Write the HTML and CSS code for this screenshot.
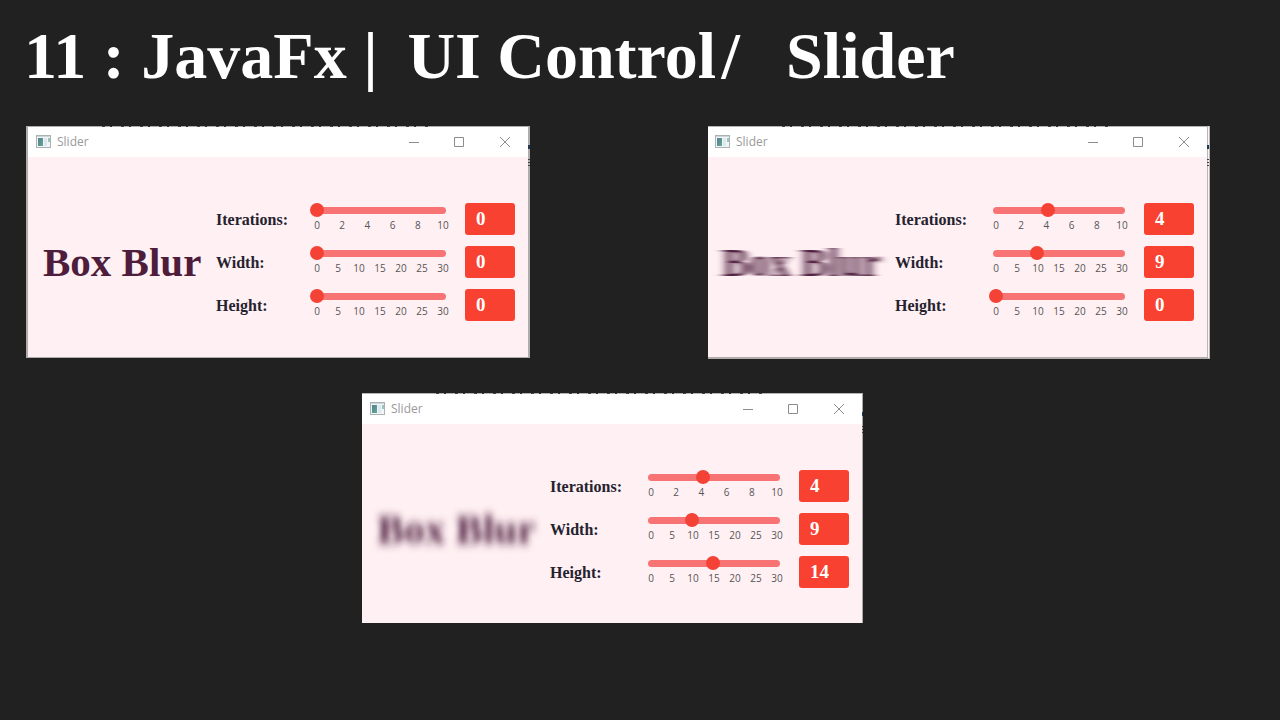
FILE: index.html
```html
<!doctype html>
<html lang="en">
<head>
<meta charset="utf-8">
<meta name="viewport" content="width=device-width, initial-scale=1">
<title>11 : JavaFx | UI Control / Slider</title>
<link rel="stylesheet" href="styles.css">
</head>
<body>

<!-- shared icons and blur filters -->
<svg class="defs" width="0" height="0" aria-hidden="true">
    <defs>
        <linearGradient id="teal" x1="0" y1="0" x2="1" y2="1">
            <stop offset="0" stop-color="#5a7d92"/>
            <stop offset="1" stop-color="#5fa894"/>
        </linearGradient>
        <filter id="blurWidth" x="-20%" y="-20%" width="140%" height="140%">
            <feGaussianBlur stdDeviation="4 0"/>
        </filter>
        <filter id="blurBoth" x="-20%" y="-50%" width="140%" height="200%">
            <feGaussianBlur stdDeviation="3 5"/>
        </filter>
        <symbol id="app" viewBox="0 0 16 14">
            <rect x=".5" y=".5" width="14" height="12" fill="#f1f5f6" stroke="#a9b3b6"/>
            <path d="M1 1.500h13" stroke="#cdd5d8"/>
            <rect x="2" y="3" width="5" height="8" fill="url(#teal)"/>
            <rect x="8" y="3" width="3" height="8" fill="#dde7f0"/>
            <rect x="12" y="3" width="2" height="4" fill="#9cc4bb"/>
        </symbol>
        <symbol id="min" viewBox="0 0 12 12"><path d="M2 6.500h10" stroke="#8c8c8c"/></symbol>
        <symbol id="max" viewBox="0 0 12 12"><path d="M1.500 1.500h9v9h-9z" fill="none" stroke="#8c8c8c"/></symbol>
        <symbol id="close" viewBox="0 0 12 12"><path d="M1 1l10 10M11 1L1 11" stroke="#8c8c8c"/></symbol>
    </defs>
</svg>

<h1>11 : JavaFx |&thinsp; UI Control&hairsp;/&nbsp;&thinsp; Slider</h1>

<main>
    <div class="row">
        <section class="window framed">
            <header class="titlebar">
                <svg class="app-icon"><use href="#app"/></svg>
                <span class="name">Slider</span>
                <button type="button" aria-label="Minimize"><svg><use href="#min"/></svg></button>
                <button type="button" aria-label="Maximize"><svg><use href="#max"/></svg></button>
                <button type="button" aria-label="Close"><svg><use href="#close"/></svg></button>
            </header>
            <div class="content">
                <div class="sample">Box Blur</div>
                <div class="controls">
                    <div class="control">
                        <label for="iter1">Iterations:</label>
                        <div class="slider">
                            <input type="range" id="iter1" min="0" max="10" value="0">
                            <div class="ticks"><span>0</span><span>2</span><span>4</span><span>6</span><span>8</span><span>10</span></div>
                        </div>
                        <input class="value" type="text" value="0" aria-label="Iterations value">
                    </div>
                    <div class="control">
                        <label for="width1">Width:</label>
                        <div class="slider">
                            <input type="range" id="width1" min="0" max="30" value="0">
                            <div class="ticks"><span>0</span><span>5</span><span>10</span><span>15</span><span>20</span><span>25</span><span>30</span></div>
                        </div>
                        <input class="value" type="text" value="0" aria-label="Width value">
                    </div>
                    <div class="control">
                        <label for="height1">Height:</label>
                        <div class="slider">
                            <input type="range" id="height1" min="0" max="30" value="0">
                            <div class="ticks"><span>0</span><span>5</span><span>10</span><span>15</span><span>20</span><span>25</span><span>30</span></div>
                        </div>
                        <input class="value" type="text" value="0" aria-label="Height value">
                    </div>
                </div>
            </div>
        </section>

        <section class="window edged">
            <header class="titlebar">
                <svg class="app-icon"><use href="#app"/></svg>
                <span class="name">Slider</span>
                <button type="button" aria-label="Minimize"><svg><use href="#min"/></svg></button>
                <button type="button" aria-label="Maximize"><svg><use href="#max"/></svg></button>
                <button type="button" aria-label="Close"><svg><use href="#close"/></svg></button>
            </header>
            <div class="content">
                <div class="sample blur-width">Box Blur</div>
                <div class="controls">
                    <div class="control">
                        <label for="iter2">Iterations:</label>
                        <div class="slider">
                            <input type="range" id="iter2" min="0" max="10" step="any" value="4.1">
                            <div class="ticks"><span>0</span><span>2</span><span>4</span><span>6</span><span>8</span><span>10</span></div>
                        </div>
                        <input class="value" type="text" value="4" aria-label="Iterations value">
                    </div>
                    <div class="control">
                        <label for="width2">Width:</label>
                        <div class="slider">
                            <input type="range" id="width2" min="0" max="30" step="any" value="9.8">
                            <div class="ticks"><span>0</span><span>5</span><span>10</span><span>15</span><span>20</span><span>25</span><span>30</span></div>
                        </div>
                        <input class="value" type="text" value="9" aria-label="Width value">
                    </div>
                    <div class="control">
                        <label for="height2">Height:</label>
                        <div class="slider">
                            <input type="range" id="height2" min="0" max="30" value="0">
                            <div class="ticks"><span>0</span><span>5</span><span>10</span><span>15</span><span>20</span><span>25</span><span>30</span></div>
                        </div>
                        <input class="value" type="text" value="0" aria-label="Height value">
                    </div>
                </div>
            </div>
        </section>
    </div>

    <div class="row center">
        <section class="window plain">
            <header class="titlebar">
                <svg class="app-icon"><use href="#app"/></svg>
                <span class="name">Slider</span>
                <button type="button" aria-label="Minimize"><svg><use href="#min"/></svg></button>
                <button type="button" aria-label="Maximize"><svg><use href="#max"/></svg></button>
                <button type="button" aria-label="Close"><svg><use href="#close"/></svg></button>
            </header>
            <div class="content">
                <div class="sample blur-both">Box Blur</div>
                <div class="controls">
                    <div class="control">
                        <label for="iter3">Iterations:</label>
                        <div class="slider">
                            <input type="range" id="iter3" min="0" max="10" step="any" value="4.1">
                            <div class="ticks"><span>0</span><span>2</span><span>4</span><span>6</span><span>8</span><span>10</span></div>
                        </div>
                        <input class="value" type="text" value="4" aria-label="Iterations value">
                    </div>
                    <div class="control">
                        <label for="width3">Width:</label>
                        <div class="slider">
                            <input type="range" id="width3" min="0" max="30" step="any" value="9.8">
                            <div class="ticks"><span>0</span><span>5</span><span>10</span><span>15</span><span>20</span><span>25</span><span>30</span></div>
                        </div>
                        <input class="value" type="text" value="9" aria-label="Width value">
                    </div>
                    <div class="control">
                        <label for="height3">Height:</label>
                        <div class="slider">
                            <input type="range" id="height3" min="0" max="30" step="any" value="14.8">
                            <div class="ticks"><span>0</span><span>5</span><span>10</span><span>15</span><span>20</span><span>25</span><span>30</span></div>
                        </div>
                        <input class="value" type="text" value="14" aria-label="Height value">
                    </div>
                </div>
            </div>
        </section>
    </div>
</main>

</body>
</html>
```

FILE: styles.css
```css
*{
    box-sizing: border-box;
}
body{
    margin: 0;
    min-height: 100vh;
    background-color: #212121;
    font-family: "Palatino Linotype", Palatino, "Liberation Serif", serif;
}
.defs{
    position: absolute;
}
h1{
    margin: 0;
    padding: 16px 24px 30px;
    color: #fff;
    font-size: 66px;
    line-height: 80px;
    white-space: nowrap;
}
main{
    display: flex;
    flex-direction: column;
    gap: 34px;
    padding: 0 70px 20px 26px;
}
.row{
    display: flex;
    justify-content: space-between;
    align-items: flex-start;
}
.center{
    justify-content: center;
    padding-right: 11px;
}

/* window */
.window{
    position: relative;
    border-top: 1px solid #b5b3b3;
    border-right: 1px solid #aaa;
    background-color: #fff0f3;
}
.framed{
    border: 2px solid #b0acac;
    border-top-width: 1px;
    border-bottom-width: 1px;
}
.edged{
    border-right: 3px double #b8b6b6;
    border-bottom: 2px solid #b0acac;
}
.window::before{
    content: "";
    position: absolute;
    top: -1px;
    left: 74px;
    width: 330px;
    height: 1px;
    background: repeating-linear-gradient(90deg, #444 0 3px, transparent 3px 8px, #333 8px 10px, transparent 10px 19px);
}
.window::after{
    content: "";
    position: absolute;
    top: 18px;
    right: -2px;
    width: 2px;
    height: 21px;
    background: linear-gradient(#1b3a52 4px, transparent 4px 14px, #444 14px 15px, transparent 15px 17px, #444 17px 18px, transparent 18px 20px, #444 20px);
}
.plain::after{
    right: -1px;
    width: 1px;
}
.titlebar{
    display: flex;
    align-items: center;
    height: 30px;
    padding-left: 8px;
    background-color: #fff;
}
.app-icon{
    width: 16px;
    height: 14px;
}
.name{
    flex: 1;
    margin-left: 5px;
    color: #999;
    font: 12px/16px "Open Sans", "Noto Sans", sans-serif;
}
.titlebar button{
    display: flex;
    align-items: center;
    justify-content: center;
    width: 46px;
    height: 30px;
    padding: 0;
    border: 0;
    background: none;
}
.titlebar button svg{
    width: 12px;
    height: 12px;
}
.content{
    display: flex;
    padding: 46px 13px 36px 15px;
}
.edged .titlebar{
    padding-left: 7px;
}
.edged .content{
    padding-left: 14px;
}
.plain .content{
    padding-bottom: 35px;
}

/* sample text */
.sample{
    width: 173px;
    padding-top: 36px;
    color: #4e1d3c;
    font-size: 41px;
    font-weight: bold;
    line-height: 46px;
    white-space: nowrap;
}
.blur-width{
    filter: url(#blurWidth);
}
.blur-both{
    filter: url(#blurBoth);
}

/* sliders */
.controls{
    display: flex;
    flex-direction: column;
    gap: 11px;
}
.control{
    display: flex;
    height: 32px;
}
.control label{
    width: 94px;
    color: #24222e;
    font-size: 16px;
    font-weight: bold;
    line-height: 34px;
}
.slider{
    position: relative;
    width: 140px;
    margin-right: 15px;
}
.slider::before{
    content: "";
    position: absolute;
    top: 4px;
    left: 4px;
    right: 4px;
    height: 7px;
    border-radius: 4px;
    background-color: #f87474;
}
.slider input{
    -webkit-appearance: none;
    appearance: none;
    position: relative;
    display: block;
    width: 100%;
    height: 14px;
    margin: 0;
    background: transparent;
}
.slider input::-webkit-slider-thumb{
    -webkit-appearance: none;
    width: 14px;
    height: 14px;
    border-radius: 50%;
    background-color: #f44336;
}
.ticks{
    display: flex;
    justify-content: space-between;
    color: #555;
    font: 10px/16px "Open Sans", "Noto Sans", sans-serif;
}
.ticks span{
    width: 14px;
    text-align: center;
}
.value{
    width: 50px;
    height: 32px;
    padding: 0 0 0 11px;
    border: 0;
    border-radius: 3px;
    background-color: #f94132;
    color: #fff;
    font: bold 19px "Palatino Linotype", Palatino, "Liberation Serif", serif;
}
```
